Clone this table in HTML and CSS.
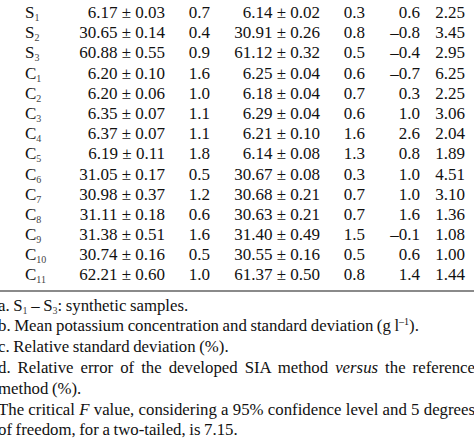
FILE: index.html
```html
<!DOCTYPE html>
<html>
<head>
<meta charset="utf-8">
<link rel="stylesheet" href="styles.css">
</head>
<body>
<div class="page">
  <div class="table">
    <div class="row"><span class="lab">S<sub>1</sub></span><span>6.17 ± 0.03</span><span>0.7</span><span>6.14 ± 0.02</span><span>0.3</span><span>0.6</span><span>2.25</span></div>
    <div class="row"><span class="lab">S<sub>2</sub></span><span>30.65 ± 0.14</span><span>0.4</span><span>30.91 ± 0.26</span><span>0.8</span><span>–0.8</span><span>3.45</span></div>
    <div class="row"><span class="lab">S<sub>3</sub></span><span>60.88 ± 0.55</span><span>0.9</span><span>61.12 ± 0.32</span><span>0.5</span><span>–0.4</span><span>2.95</span></div>
    <div class="row"><span class="lab">C<sub>1</sub></span><span>6.20 ± 0.10</span><span>1.6</span><span>6.25 ± 0.04</span><span>0.6</span><span>–0.7</span><span>6.25</span></div>
    <div class="row"><span class="lab">C<sub>2</sub></span><span>6.20 ± 0.06</span><span>1.0</span><span>6.18 ± 0.04</span><span>0.7</span><span>0.3</span><span>2.25</span></div>
    <div class="row"><span class="lab">C<sub>3</sub></span><span>6.35 ± 0.07</span><span>1.1</span><span>6.29 ± 0.04</span><span>0.6</span><span>1.0</span><span>3.06</span></div>
    <div class="row"><span class="lab">C<sub>4</sub></span><span>6.37 ± 0.07</span><span>1.1</span><span>6.21 ± 0.10</span><span>1.6</span><span>2.6</span><span>2.04</span></div>
    <div class="row"><span class="lab">C<sub>5</sub></span><span>6.19 ± 0.11</span><span>1.8</span><span>6.14 ± 0.08</span><span>1.3</span><span>0.8</span><span>1.89</span></div>
    <div class="row"><span class="lab">C<sub>6</sub></span><span>31.05 ± 0.17</span><span>0.5</span><span>30.67 ± 0.08</span><span>0.3</span><span>1.0</span><span>4.51</span></div>
    <div class="row"><span class="lab">C<sub>7</sub></span><span>30.98 ± 0.37</span><span>1.2</span><span>30.68 ± 0.21</span><span>0.7</span><span>1.0</span><span>3.10</span></div>
    <div class="row"><span class="lab">C<sub>8</sub></span><span>31.11 ± 0.18</span><span>0.6</span><span>30.63 ± 0.21</span><span>0.7</span><span>1.6</span><span>1.36</span></div>
    <div class="row"><span class="lab">C<sub>9</sub></span><span>31.38 ± 0.51</span><span>1.6</span><span>31.40 ± 0.49</span><span>1.5</span><span>–0.1</span><span>1.08</span></div>
    <div class="row"><span class="lab">C<sub>10</sub></span><span>30.74 ± 0.16</span><span>0.5</span><span>30.55 ± 0.16</span><span>0.5</span><span>0.6</span><span>1.00</span></div>
    <div class="row"><span class="lab">C<sub>11</sub></span><span>62.21 ± 0.60</span><span>1.0</span><span>61.37 ± 0.50</span><span>0.8</span><span>1.4</span><span>1.44</span></div>
  </div>
  <div class="rule"></div>
  <div class="notes">
    <p>a. S<sub>1</sub> – S<sub>3</sub>: synthetic samples.</p>
    <p>b. Mean potassium concentration and standard deviation (g l<sup>–1</sup>).</p>
    <p>c. Relative standard deviation (%).</p>
    <p>d. Relative error of the developed SIA method <i>versus</i> the reference method (%).</p>
    <p>The critical <i>F</i> value, considering a 95% confidence level and 5 degrees of freedom, for a two-tailed, is 7.15.</p>
  </div>
</div>
</body>
</html>
```

FILE: styles.css
```css
html, body {
  margin: 0;
  padding: 0;
  background: #fff;
}
body {
  font-family: "Liberation Serif", "Times New Roman", serif;
  font-size: 17px;
  color: #111;
  width: 474px;
  height: 440px;
  overflow: hidden;
}
.page {
  padding-top: 3px;
}
.table {
  display: flex;
  flex-direction: column;
}
.row {
  display: grid;
  grid-template-columns: 60px 105px 45px 110px 45px 55px 45px;
  height: 20.2px;
  line-height: 20px;
  white-space: nowrap;
}
.row span {
  text-align: right;
}
.row .lab {
  text-align: left;
  padding-left: 25px;
}
sub {
  font-size: 10px;
  vertical-align: -3px;
  line-height: 0;
  color: #444;
}
sup {
  font-size: 10px;
  vertical-align: 6px;
  line-height: 0;
}
.rule {
  height: 2px;
  background: #8a8a8a;
  margin-top: 4px;
}
.notes {
  margin-left: -2px;
  width: 477px;
  padding-top: 4px;
  font-size: 16.8px;
  word-spacing: -0.6px;
}
.notes p {
  margin: 0;
  line-height: 20.8px;
  text-align: justify;
}
```
